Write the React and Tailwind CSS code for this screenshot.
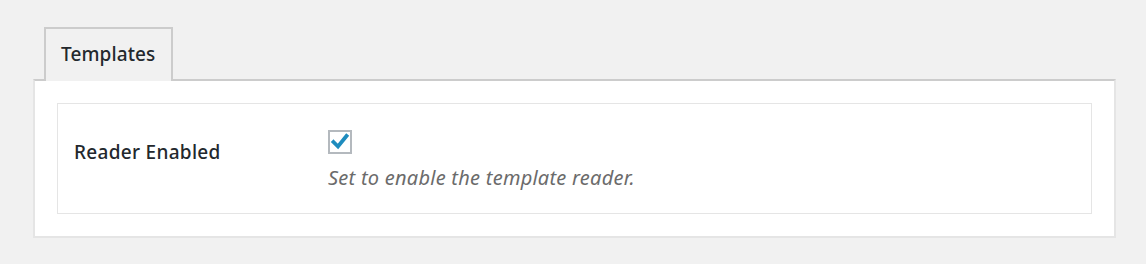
export default function App() {
  return (
    <div
      className="w-[1146px] h-[264px] bg-[#f1f1f1] pt-[27px] pl-[33px]"
      style={{ fontFamily: '"Noto Sans", "Open Sans", sans-serif' }}
    >
      <div className="flex pl-[11px]">
        <div className="relative z-10 -mb-[2px] h-[54px] w-[129px] border-2 border-b-0 border-[#cccccc] bg-[#f1f1f1] flex items-start">
          <div className="flex h-[50px] w-full items-center pl-[15px] text-[19px] font-medium text-[#23282d] tracking-[0.1px]">
            Templates
          </div>
        </div>
      </div>
      <div className="relative w-[1083px] h-[159px] bg-white border-2 border-[#e5e5e5] border-t-[#cccccc] p-[22px]">
        <div className="h-[111px] border border-[#e5e5e5] flex">
          <div className="w-[270px] pl-[16px] pt-[34px] text-[19px] leading-[28px] font-medium text-[#23282d] tracking-[0.3px]">
            Reader Enabled
          </div>
          <div className="pt-[26px] pl-[0px]">
            <div className="w-[24px] h-[24px] border-2 border-[#b4b9be] bg-white flex items-center justify-center">
              <svg width="20" height="20" viewBox="0 0 20 20">
                <path d="M3.5 10 L8 14.5 L16.5 4" fill="none" stroke="#1e8cbe" strokeWidth="3.8" strokeLinecap="square" strokeLinejoin="miter" />
              </svg>
            </div>
            <div className="mt-[10px] text-[20px] leading-[28px] italic text-[#6b6b6b] tracking-[0.25px]">
              Set to enable the template reader.
            </div>
          </div>
        </div>
      </div>
    </div>
  );
}
